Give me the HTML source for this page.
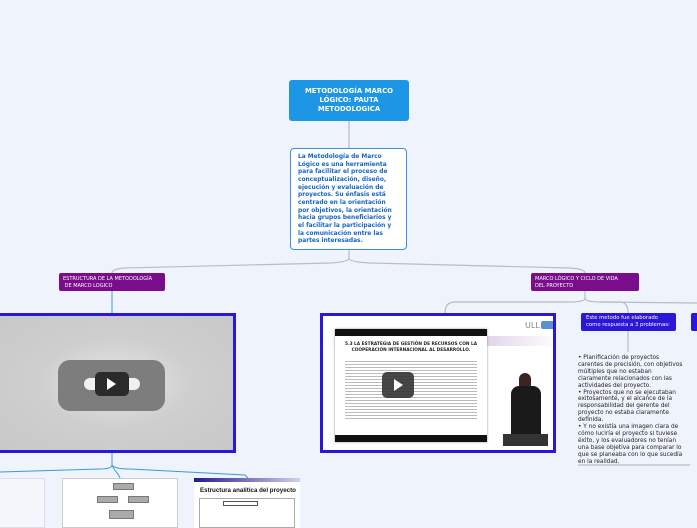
<!DOCTYPE html>
<html><head><meta charset="utf-8"><style>
*{margin:0;padding:0;box-sizing:border-box}
body{width:697px;height:520px;overflow:hidden;background:#eff3fc;position:relative;font-family:"DejaVu Sans","Liberation Sans",sans-serif}
.a{position:absolute}
.title{left:289px;top:80px;width:120px;height:41px;background:#1e96e6;border-radius:3px;color:#fff;font-weight:bold;font-size:6.9px;text-align:center;line-height:9px;padding-top:7px;white-space:nowrap}
.desc{left:290px;top:148px;width:117px;height:102px;background:#fff;border:1.5px solid #3d8fe6;border-radius:4px;color:#1565c0;font-weight:bold;font-size:5.9px;line-height:7.65px;padding:5px 7px;white-space:nowrap}
.pl{background:#7a0d8c;color:#fff;font-size:5px;line-height:7px;padding:3px 4px;border-radius:2px;white-space:nowrap}
.vid{border:3px solid #2c17d8;}
.bl{background:#2c17d8;color:#fff;font-size:5.3px;line-height:7px;padding:2px 5px;border-radius:2px;white-space:nowrap}
.txt{font-size:5.8px;line-height:6.9px;color:#222;white-space:nowrap}
</style></head><body>
<svg class="a" style="left:0;top:0" width="697" height="520">
<g fill="none" stroke="#b8bcc4" stroke-width="1.2">
<line x1="349" y1="121" x2="349" y2="148"/>
<path d="M349 250 V258 Q349 262 330 263 L125 268 Q112 269 112 273"/>
<path d="M349 258 Q349 262 370 263 L570 268 Q585 269 585 273"/>
<path d="M585 291 V298 Q585 302 570 302 L455 302 Q445 302 445 313"/>
<path d="M585 298 Q585 302 600 302 L620 302 Q628 302 628 313"/>
<path d="M628 331 V352"/>
<path d="M600 302 L697 303"/>
<line x1="578" y1="465" x2="690" y2="465"/>
</g>
<g fill="none" stroke="#3a9bd6" stroke-width="1">
<line x1="112" y1="291" x2="112" y2="313"/>
<path d="M112 452 V465 Q112 469 100 469 L0 472"/>
<path d="M112 465 Q114 470 118 474 L120 478"/>
<path d="M112 465 Q114 469 130 469 L245 475 L248 478"/>
</g>
</svg>
<div class="a title">METODOLOGÍA MARCO<br>LÓGICO: PAUTA<br>METODOLOGICA</div>
<div class="a desc">La Metodología de Marco<br>Lógico es una herramienta<br>para facilitar el proceso de<br>conceptualización, diseño,<br>ejecución y evaluación de<br>proyectos. Su énfasis está<br>centrado en la orientación<br>por objetivos, la orientación<br>hacia grupos beneficiarios y<br>el facilitar la participación y<br>la comunicación entre las<br>partes interesadas.</div>
<div class="a pl" style="left:59px;top:273px;width:106px;height:18px">ESTRUCTURA DE LA METODOLOGÍA<br>&nbsp;DE MARCO LOGICO</div>
<div class="a pl" style="left:531px;top:273px;width:108px;height:18px">MARCO LÓGICO Y CICLO DE VIDA<br>DEL PROYECTO</div>
<div class="a vid" style="left:-5px;top:313px;width:241px;height:140px;background:radial-gradient(ellipse at 50% 50%,#e8e8e8 0%,#cfcfcf 45%,#c8c8c8 100%)"></div>
<div class="a" style="left:58px;top:360px;width:107px;height:51px;background:#7d7d7d;border-radius:12px"></div>
<div class="a" style="left:84px;top:378px;width:56px;height:12px;background:#f0f0f0;border-radius:6px"></div>
<div class="a" style="left:95px;top:372px;width:34px;height:24px;background:#2a2a2a;border-radius:5px"></div>
<svg class="a" style="left:107px;top:378px" width="10" height="12"><path d="M0 0 L9 6 L0 12Z" fill="#fff"/></svg>
<div class="a" style="left:-2px;top:478px;width:47px;height:50px;background:#f5f7fc;border:1px solid #dde"></div>
<div class="a" style="left:62px;top:478px;width:116px;height:50px;background:#fff;border:1px solid #ccc">
 <div class="a" style="left:50px;top:4px;width:21px;height:7px;background:#aaa;border:1px solid #777"></div>
 <div class="a" style="left:34px;top:17px;width:21px;height:7px;background:#aaa;border:1px solid #777"></div>
 <div class="a" style="left:65px;top:17px;width:21px;height:7px;background:#aaa;border:1px solid #777"></div>
 <div class="a" style="left:46px;top:31px;width:25px;height:9px;background:#aaa;border:1px solid #777"></div>
</div>
<div class="a" style="left:194px;top:478px;width:106px;height:50px;background:#fff">
 <div style="height:4px;background:linear-gradient(90deg,#221a8c,#cfd0ef)"></div>
 <div style="font-family:'Liberation Sans',sans-serif;font-size:6.2px;font-weight:bold;padding:5px 6px 0;color:#111;white-space:nowrap">Estructura analítica del proyecto</div>
 <div class="a" style="left:5px;top:20px;width:96px;height:30px;border:1px solid #aaa"></div>
 <div class="a" style="left:29px;top:23px;width:35px;height:5px;border:1px solid #555"></div>
</div>
<div class="a vid" style="left:320px;top:313px;width:236px;height:140px;background:#fff;overflow:hidden">
 <div class="a" style="left:0;top:20px;width:236px;height:10px;background:linear-gradient(90deg,#fff,#d8c8e4 60%,#fff)"></div>
 <div class="a" style="left:12px;top:13px;width:152px;height:113px;background:#fff;border-top:7px solid #111;border-bottom:7px solid #111;box-shadow:0 0 2px #888">
  <div style="font-size:4.3px;font-weight:bold;text-align:center;padding-top:6px;line-height:6px;color:#222;white-space:nowrap">5.3 LA ESTRATEGIA DE GESTIÓN DE RECURSOS CON LA<br>COOPERACIÓN INTERNACIONAL AL DESARROLLO.</div>
  <div style="margin:5px 10px;height:60px;background:repeating-linear-gradient(#fff 0,#fff 2px,#bbb 2px,#bbb 3px)"></div>
 </div>
 <div class="a" style="left:59px;top:56px;width:32px;height:26px;background:#333;border-radius:5px;opacity:.9"></div>
 <svg class="a" style="left:71px;top:63px" width="10" height="12"><path d="M0 0 L9 6 L0 12Z" fill="#fff"/></svg>
 <div class="a" style="left:202px;top:5px;font-size:8px;color:#888">ULL</div>
 <div class="a" style="left:218px;top:5px;width:17px;height:8px;background:#5a8fd0;border-radius:2px"></div>
 <div class="a" style="left:196px;top:57px;width:12px;height:14px;background:#3a2520;border-radius:6px 6px 2px 2px"></div>
 <div class="a" style="left:188px;top:70px;width:30px;height:55px;background:#1a1a1a;border-radius:8px 8px 0 0"></div>
 <div class="a" style="left:180px;top:118px;width:45px;height:12px;background:#333"></div>
</div>
<div class="a bl" style="left:581px;top:313px;width:95px;height:18px">Este metodo fue elaborado<br>como respuesta a 3 problemas:</div>
<div class="a bl" style="left:691px;top:313px;width:20px;height:18px"></div>
<div class="a txt" style="left:578px;top:355px">• Planificación de proyectos<br>carentes de precisión, con objetivos<br>múltiples que no estaban<br>claramente relacionados con las<br>actividades del proyecto.<br>• Proyectos que no se ejecutaban<br>exitosamente, y el alcance de la<br>responsabilidad del gerente del<br>proyecto no estaba claramente<br>definida.<br>• Y no existía una imagen clara de<br>cómo luciría el proyecto si tuviese<br>éxito, y los evaluadores no tenían<br>una base objetiva para comparar lo<br>que se planeaba con lo que sucedía<br>en la realidad.</div>
</body></html>
